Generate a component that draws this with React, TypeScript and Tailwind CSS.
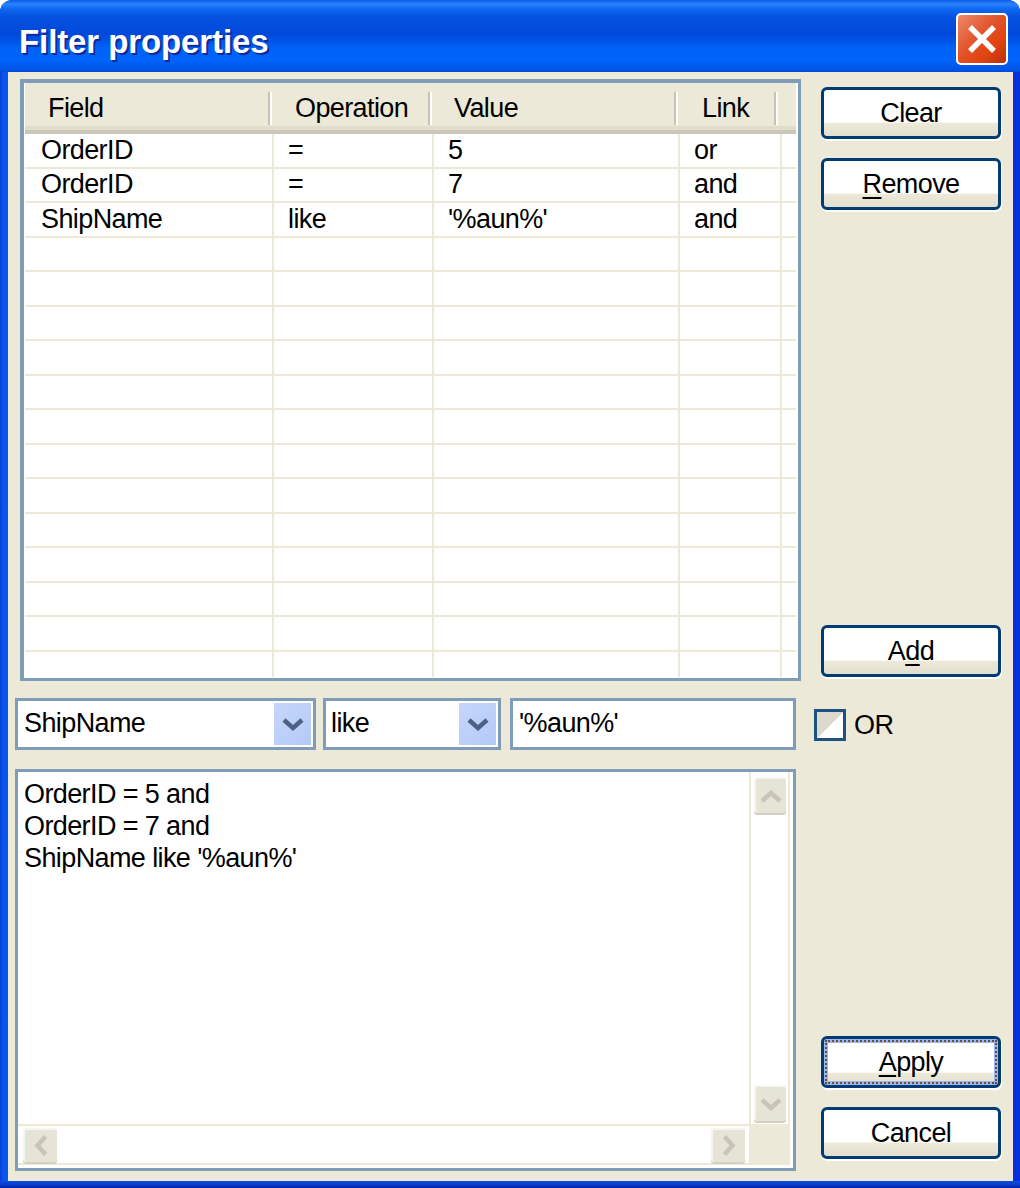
import React from "react";

const rows = [
  ["OrderID", "=", "5", "or"],
  ["OrderID", "=", "7", "and"],
  ["ShipName", "like", "'%aun%'", "and"],
  ...Array.from({ length: 12 }, () => ["", "", "", ""]),
];

const HeaderCell: React.FC<{ label: string; className: string; pad: string }> = ({ label, className, pad }) => (
  <div className={`flex items-center justify-between ${className}`}>
    <span className={pad}>{label}</span>
    <div className="flex h-[33px] shrink-0">
      <div className="w-[2px] bg-[#c7c3b3]" />
      <div className="w-[2px] bg-white" />
    </div>
  </div>
);

const Cells: React.FC<{ cells: string[] }> = ({ cells }) => (
  <>
    <div className="w-[249px] pl-[16px] border-r-2 border-[#ece9d8]">{cells[0]}</div>
    <div className="w-[160px] pl-[14px] border-r-2 border-[#ece9d8]">{cells[1]}</div>
    <div className="w-[246px] pl-[14px] border-r-2 border-[#ece9d8]">{cells[2]}</div>
    <div className="w-[102px] pl-[14px] border-r-2 border-[#ece9d8]">{cells[3]}</div>
  </>
);

const XpButton: React.FC<{ children: React.ReactNode; className?: string; focused?: boolean }> = ({
  children,
  className = "",
  focused = false,
}) => (
  <button
    className={`w-[180px] h-[52px] flex items-stretch rounded-[6px] border-[3px] border-[#003c74] ${
      focused
        ? "p-[1px] bg-[linear-gradient(180deg,#ffffff_0%,#ffffff_72%,#ece9d8_74%,#e2dfd0_100%)] shadow-[inset_0_0_0_4px_#9db8ee,1px_2px_0_#ffffff]"
        : "bg-[linear-gradient(180deg,#ffffff_0%,#ffffff_70%,#ece9d8_72%,#e2dfd0_100%)] shadow-[1px_2px_0_#ffffff]"
    } ${className}`}
  >
    <span
      className={`flex-1 flex items-center justify-center ${
        focused ? "border-2 border-dotted border-[#6b4a3a]" : ""
      }`}
    >
      <span className={focused ? "mt-[1px]" : "mt-[1px]"}>{children}</span>
    </span>
  </button>
);

const ComboArrow: React.FC = () => (
  <div className="w-[37px] h-[42px] mr-[2px] flex items-center justify-center bg-[linear-gradient(135deg,#c6d6fb,#b2caf6)]">
    <svg width="24" height="15" viewBox="0 0 24 15" fill="none">
      <path d="M3 3 L12 11 L21 3" stroke="#4d6185" strokeWidth="4.5" />
    </svg>
  </div>
);

const ScrollButton: React.FC<{ dir: "up" | "down" | "left" | "right" }> = ({ dir }) => {
  const rotate = { up: "rotate-180", down: "", left: "rotate-90", right: "-rotate-90" }[dir];
  const size = dir === "up" || dir === "down" ? "w-[32px] h-[36px]" : "w-[34px] h-[34px]";
  return (
    <div
      className={`${size} flex items-center justify-center rounded-[3px] bg-[#e6e3d7] border-l-2 border-t-2 border-[#f6f5ef] shadow-[0_2px_0_#d3d0c2]`}
    >
      <svg className={rotate} width="24" height="17" viewBox="0 0 24 17" fill="none">
        <path d="M3 4 L12 12 L21 4" stroke="#c8c5b6" strokeWidth="4.5" />
      </svg>
    </div>
  );
};

export default function App() {
  return (
    <div className="w-[1020px] h-[1188px] flex flex-col overflow-hidden bg-white text-black text-[27px] tracking-[-0.6px] leading-none font-['Liberation_Sans',sans-serif]">
      <div className="flex-1 flex flex-col rounded-t-[12px] overflow-hidden bg-[linear-gradient(90deg,#0a3ccc_0px,#0855f0_3px,#0855f0_50%,#0831d9_100%)]">
        {/* title bar */}
        <div className="h-[72px] shrink-0 flex items-center justify-between pl-[19px] pr-[12px] bg-[linear-gradient(180deg,#0a5be6_0px,#2a83ff_4px,#0f68f2_9px,#0553e0_16px,#0148da_34px,#0062f6_48px,#0064fa_60px,#0053e4_70px,#0048d8_72px)]">
          <span className="text-white font-bold text-[33px] tracking-[-0.1px] mt-[10px] [text-shadow:2px_2px_0_#0f2a9c]">
            Filter properties
          </span>
          <div className="w-[52px] h-[52px] mt-[6px] flex items-center justify-center rounded-[5px] border-2 border-white bg-[linear-gradient(135deg,#ec8a6c_0%,#e2522a_45%,#e04410_70%,#b8300c_100%)]">
            <svg width="30" height="30" viewBox="0 0 30 30" fill="none">
              <path d="M3 3 L27 27 M27 3 L3 27" stroke="white" strokeWidth="5.5" />
            </svg>
          </div>
        </div>

        {/* dialog body */}
        <div className="flex-1 min-h-0 ml-[8px] mr-[7px] flex bg-[#ece9d8]">
          <div className="w-[791px] shrink-0 flex flex-col pl-[7px] pt-[7px]">
            {/* grid */}
            <div className="ml-[5px] w-[781px] h-[602px] shrink-0 border-4 border-b-[3px] border-r-[3px] border-[#7f9db9] bg-white overflow-hidden flex flex-col">
              <div className="h-[51px] shrink-0 flex bg-[#ece9d8] border-b-[4px] border-[#cbc7b8] shadow-[inset_0_-4px_0_#e0ddcc] ml-[1px] mr-[2px] pt-[4px]">
                <HeaderCell label="Field" className="w-[247px]" pad="pl-[23px]" />
                <HeaderCell label="Operation" className="w-[160px]" pad="pl-[23px]" />
                <HeaderCell label="Value" className="w-[246px]" pad="pl-[22px]" />
                <HeaderCell label="Link" className="w-[100px]" pad="pl-[24px]" />
              </div>
              {rows.map((cells, i) => (
                <div
                  key={i}
                  className="h-[34.5px] shrink-0 ml-[1px] mr-[2px] flex items-stretch border-b-2 border-[#ece9d8] [&>div]:flex [&>div]:items-center"
                >
                  <Cells cells={cells} />
                </div>
              ))}
              <div className="h-[25px] shrink-0 ml-[1px] flex items-stretch">
                <Cells cells={["", "", "", ""]} />
              </div>
            </div>

            {/* filter editor */}
            <div className="mt-[17px] flex h-[52px] shrink-0">
              <div className="w-[301px] border-[3px] border-[#7f9db9] bg-white flex items-center justify-between pl-[6px]">
                <span className="-mt-[2px]">ShipName</span>
                <ComboArrow />
              </div>
              <div className="ml-[7px] w-[178px] border-[3px] border-[#7f9db9] bg-white flex items-center justify-between pl-[5px]">
                <span className="-mt-[2px]">like</span>
                <ComboArrow />
              </div>
              <div className="ml-[9px] w-[286px] border-[3px] border-[#7f9db9] bg-white flex items-center pl-[6px]">
                <span className="-mt-[2px]">'%aun%'</span>
              </div>
            </div>

            {/* expression */}
            <div className="mt-[19px] w-[781px] h-[402px] shrink-0 border-[3px] border-[#7f9db9] bg-white flex flex-col pr-[3px] pb-[3px]">
              <div className="flex-1 min-h-0 flex">
                <div className="flex-1 pl-[6px] pt-[6px] leading-[32px]">
                  <div>OrderID = 5 and</div>
                  <div>OrderID = 7 and</div>
                  <div>ShipName like '%aun%'</div>
                </div>
                <div className="w-[41px] shrink-0 border-x-2 border-[#ece9d8] flex flex-col items-center justify-between pt-[5px] pb-[3px]">
                  <ScrollButton dir="up" />
                  <ScrollButton dir="down" />
                </div>
              </div>
              <div className="h-[41px] shrink-0 flex">
                <div className="flex-1 border-y-2 border-[#ece9d8] flex items-center justify-between pl-[5px] pr-[4px]">
                  <ScrollButton dir="left" />
                  <ScrollButton dir="right" />
                </div>
                <div className="w-[41px] shrink-0 bg-[#ece9d8]" />
              </div>
            </div>
          </div>

          {/* action buttons */}
          <div className="flex-1 flex flex-col">
            <XpButton className="ml-[22px] mt-[15px]">Clear</XpButton>
            <XpButton className="ml-[22px] mt-[19px]">
              <span className="underline decoration-2 underline-offset-4">R</span>emove
            </XpButton>
            <XpButton className="ml-[22px] mt-[415px]">
              A<span className="underline decoration-2 underline-offset-4">d</span>d
            </XpButton>
            <div className="ml-[15px] mt-[32px] flex items-center gap-[8px]">
              <div className="w-[32px] h-[32px] border-[3px] border-[#1c5180] bg-[linear-gradient(135deg,#dcd9cc_50%,#ffffff_50%)]" />
              <span>OR</span>
            </div>
            <XpButton focused className="ml-[22px] mt-[295px]">
              <span className="underline decoration-2 underline-offset-4">A</span>pply
            </XpButton>
            <XpButton className="ml-[22px] mt-[19px]">Cancel</XpButton>
          </div>
        </div>

        <div className="h-[7px] shrink-0 bg-[linear-gradient(180deg,#0a50e0,#0a3ccc_50%,#0026a8)]" />
      </div>
    </div>
  );
}
